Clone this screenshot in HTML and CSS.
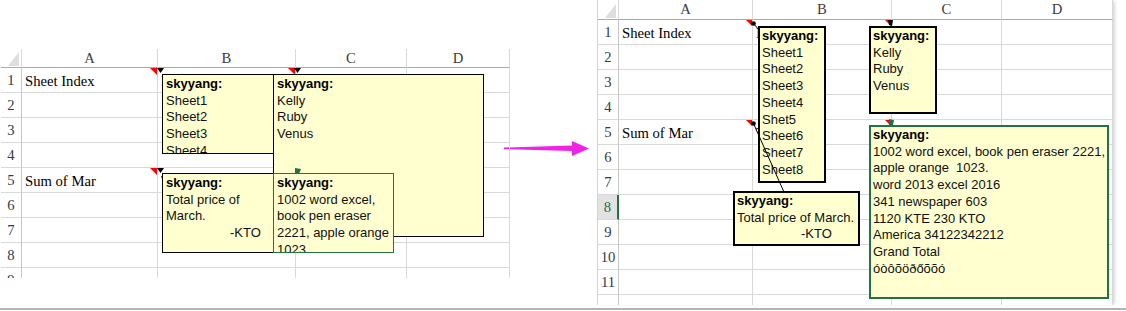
FILE: index.html
```html
<!DOCTYPE html>
<html>
<head>
<meta charset="utf-8">
<link rel="stylesheet" href="styles.css">
</head>
<body>
<div class="page">
  <div class="sheet sheet-l">
    <div class="grid grid-l">
      <div class="corner"></div><div class="ch">A</div><div class="ch">B</div><div class="ch">C</div><div class="ch">D</div>
      <div class="rh">1</div><div class="c mark">Sheet Index</div><div class="c mark">Index</div><div class="c"></div><div class="c"></div>
      <div class="rh">2</div><div class="c"></div><div class="c"></div><div class="c"></div><div class="c"></div>
      <div class="rh">3</div><div class="c"></div><div class="c"></div><div class="c"></div><div class="c"></div>
      <div class="rh">4</div><div class="c"></div><div class="c"></div><div class="c"></div><div class="c"></div>
      <div class="rh">5</div><div class="c mark">Sum of Mar</div><div class="c mark">Total</div><div class="c"></div><div class="c"></div>
      <div class="rh">6</div><div class="c"></div><div class="c"></div><div class="c"></div><div class="c"></div>
      <div class="rh">7</div><div class="c"></div><div class="c"></div><div class="c"></div><div class="c"></div>
      <div class="rh">8</div><div class="c"></div><div class="c"></div><div class="c"></div><div class="c"></div>
      <div class="rh">9</div><div class="c"></div><div class="c"></div><div class="c"></div><div class="c"></div>
    </div>
    <div class="note note-l l-b1"><b>skyyang:</b><div>Sheet1</div><div>Sheet2</div><div>Sheet3</div><div>Sheet4</div></div>
    <div class="note note-l l-c1"><b>skyyang:</b><div>Kelly</div><div>Ruby</div><div>Venus</div></div>
    <div class="note note-l l-b5"><b>skyyang:</b><div>Total price of</div><div>March.</div><div class="sig">-KTO</div></div>
    <div class="note note-l active l-c5"><b>skyyang:</b><div>1002 word excel,</div><div>book pen eraser</div><div>2221, apple orange</div><div>1023.</div></div>
    <svg class="overlay" width="509" height="229" viewBox="0 0 509 229">
      <polygon points="156,19 163,19 159.5,24" fill="#000"/>
      <polygon points="293,19 300,19 296.5,24" fill="#000"/>
      <polygon points="156,119 163,119 159.5,124" fill="#000"/>
      <polygon points="294,119 300,120 298,125 294,125" fill="#217346"/>
    </svg>
  </div>

  <div class="arrow-zone">
    <svg class="arrow" width="90" height="20" viewBox="0 0 90 20">
      <polygon points="0,7.5 68,5.5 68,1 85,8.5 68,16 68,11 0,9.2" fill="#f022e6"/>
    </svg>
  </div>

  <div class="sheet sheet-r">
    <div class="grid grid-r">
      <div class="corner"></div><div class="ch">A</div><div class="ch">B</div><div class="ch">C</div><div class="ch">D</div>
      <div class="rh">1</div><div class="c mark">Sheet Index</div><div class="c mark">Index</div><div class="c"></div><div class="c"></div>
      <div class="rh">2</div><div class="c"></div><div class="c"></div><div class="c"></div><div class="c"></div>
      <div class="rh">3</div><div class="c"></div><div class="c"></div><div class="c"></div><div class="c"></div>
      <div class="rh">4</div><div class="c"></div><div class="c"></div><div class="c"></div><div class="c"></div>
      <div class="rh">5</div><div class="c mark">Sum of Mar</div><div class="c mark">Total</div><div class="c"></div><div class="c"></div>
      <div class="rh">6</div><div class="c"></div><div class="c"></div><div class="c"></div><div class="c"></div>
      <div class="rh">7</div><div class="c"></div><div class="c"></div><div class="c"></div><div class="c"></div>
      <div class="rh sel">8</div><div class="c"></div><div class="c"></div><div class="c"></div><div class="c"></div>
      <div class="rh">9</div><div class="c"></div><div class="c"></div><div class="c"></div><div class="c"></div>
      <div class="rh">10</div><div class="c"></div><div class="c"></div><div class="c"></div><div class="c"></div>
      <div class="rh">11</div><div class="c"></div><div class="c"></div><div class="c"></div><div class="c"></div>
      <div class="rh"></div><div class="c"></div><div class="c"></div><div class="c"></div><div class="c"></div>
    </div>
    <div class="note note-r r-a1"><b>skyyang:</b><div>Sheet1</div><div>Sheet2</div><div>Sheet3</div><div>Sheet4</div><div>Shet5</div><div>Sheet6</div><div>Sheet7</div><div>Sheet8</div></div>
    <div class="note note-r r-b1"><b>skyyang:</b><div>Kelly</div><div>Ruby</div><div>Venus</div></div>
    <div class="note note-r r-a5"><b>skyyang:</b><div>Total price of March.</div><div class="sig">-KTO</div></div>
    <div class="note note-r active r-b5"><b>skyyang:</b><div>1002 word excel, book pen eraser 2221,</div><div class="pre">apple orange  1023.</div><div>word 2013 excel 2016</div><div>341 newspaper 603</div><div>1120 KTE 230 KTO</div><div>America 34122342212</div><div>Grand Total</div><div>óòôõöðőõõó</div></div>
    <svg class="overlay" width="515" height="305" viewBox="0 0 515 305">
      <line x1="155.5" y1="23.5" x2="161" y2="30" stroke="#000" stroke-width="1"/>
      <circle cx="155.5" cy="23.5" r="2.3" fill="#000"/>
      <polygon points="290,20 295,20 294,26 291,25" fill="#000"/>
      <line x1="155.5" y1="123.5" x2="185.5" y2="191" stroke="#000" stroke-width="1"/>
      <circle cx="155.5" cy="123.5" r="2.3" fill="#000"/>
      <polygon points="291,119 296,120 295,125 291,125" fill="#217346"/>
    </svg>
  </div>
</div>
</body>
</html>
```

FILE: styles.css
```css
* { box-sizing: border-box; }

html, body {
  margin: 0;
  padding: 0;
  background: #ffffff;
}

body {
  width: 1126px;
  height: 311px;
  overflow: hidden;
  font-family: "Liberation Serif", "Times New Roman", serif;
}

.page {
  display: flex;
  align-items: flex-start;
  width: 1126px;
  height: 310px;
  border-bottom: 2px solid #b4b4b4;
}

.sheet {
  position: relative;
  overflow: hidden;
  flex: none;
}

.sheet-l {
  margin: 49px 0 0 1px;
  width: 509px;
  height: 229px;
}

.sheet-r {
  width: 516px;
  height: 305px;
  border-left: 1px solid #d4d4d4;
  box-shadow: 3px 0 3px -1px #d8d8d8;
}

.grid {
  display: grid;
  grid-auto-rows: 25px;
}

.grid-l {
  grid-template-columns: 21px 136px 138px 111px 103px;
  grid-template-rows: 19px;
}

.grid-r {
  grid-template-columns: 21px 134px 139px 110px 111px;
  grid-template-rows: 20px;
}

.corner,
.ch {
  position: relative;
  border-right: 1px solid #d9d9d9;
  border-bottom: 1px solid #ababab;
}

.corner::after {
  content: "";
  position: absolute;
  right: 2px;
  bottom: 1px;
  width: 0;
  height: 0;
  border-left: 11px solid transparent;
  border-bottom: 14px solid #dedede;
}

.ch {
  display: flex;
  align-items: center;
  justify-content: center;
  font-size: 14.67px;
  color: #3b3b3b;
}

.rh {
  display: flex;
  align-items: center;
  justify-content: center;
  font-size: 14.67px;
  color: #333b48;
  border-right: 1px solid #c6c6c6;
  border-bottom: 1px solid #d9d9d9;
}

.rh.sel {
  background: #e2e2e2;
  color: #217346;
  border-right: 2px solid #217346;
}

.c {
  position: relative;
  display: flex;
  align-items: flex-end;
  padding: 0 3px 2px;
  font-size: 14.67px;
  color: #000;
  white-space: nowrap;
  border-right: 1px solid #d9d9d9;
  border-bottom: 1px solid #d9d9d9;
}

.c.mark::after {
  content: "";
  position: absolute;
  top: 0;
  right: 0;
  width: 0;
  height: 0;
  border-left: 7px solid transparent;
  border-top: 7px solid #ff0000;
}

.sheet-r .c.mark::after {
  border-left-width: 6px;
  border-top-width: 6px;
}

.note {
  position: absolute;
  background: #ffffcf;
  border: 1px solid #000;
  font-family: "Liberation Sans", Arial, sans-serif;
  font-size: 13px;
  line-height: 16.7px;
  color: #111;
  white-space: nowrap;
  overflow: hidden;
}

.note b {
  display: block;
  font-weight: bold;
  color: #000;
}

.note .sig {
  padding-left: 64px;
}

.note .pre {
  white-space: pre;
}

.note.active {
  border-color: #217346;
}

.note-l {
  padding: 1px 3px 0;
}

.note-r {
  border-width: 2px;
  padding: 0 2px;
}

.l-b1 { left: 161px; top: 25px; width: 112px; height: 80px; }
.l-c1 { left: 272px; top: 25px; width: 211px; height: 163px; }
.l-b5 { left: 161px; top: 124px; width: 112px; height: 80px; }
.l-c5 { left: 272px; top: 124px; width: 121px; height: 80px; }

.r-a1 { left: 160px; top: 26px; width: 68px; height: 157px; }
.r-b1 { left: 271px; top: 26px; width: 68px; height: 88px; }
.r-a5 { left: 135px; top: 191px; width: 127px; height: 55px; }
.r-b5 { left: 271px; top: 125px; width: 240px; height: 174px; }

.overlay {
  position: absolute;
  left: 0;
  top: 0;
  pointer-events: none;
}

.arrow-zone {
  flex: none;
  width: 87px;
  padding-top: 140px;
}

.arrow {
  display: block;
  margin-left: -6px;
}
```
